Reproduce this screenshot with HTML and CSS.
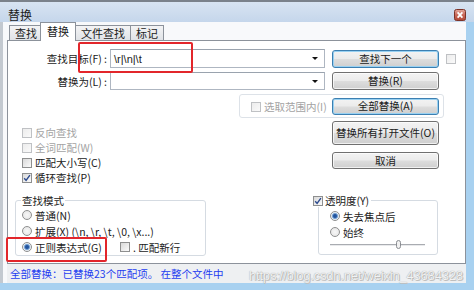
FILE: index.html
```html
<!doctype html>
<html lang="zh-CN">
  <head>
    <meta charset="UTF-8" />
    <title>替换</title>
    <link rel="stylesheet" href="styles.css">
  </head>
  <body>
    <div class="window">
      <div class="titlebar">
        <span class="title">替换</span>
        <span class="close">
          <svg width="12" height="12" viewBox="0 0 12 12">
            <defs>
              <linearGradient id="closeFill" x1="0" y1="0" x2="0" y2="1">
                <stop offset="0" stop-color="#e3a89c" />
                <stop offset="0.5" stop-color="#c9695a" />
                <stop offset="1" stop-color="#b04533" />
              </linearGradient>
            </defs>
            <rect x="0.5" y="0.5" width="11" height="11" rx="2" fill="url(#closeFill)" stroke="#7c3328" />
            <path d="M3.6 3.4 L8.4 8.6 M8.4 3.4 L3.6 8.6" stroke="#fff" stroke-width="1.7" />
          </svg>
        </span>
      </div>

      <div class="frame">
        <div class="client">
          <div class="tabs">
            <div class="tab">查找</div>
            <div class="tab active">替换</div>
            <div class="tab">文件查找</div>
            <div class="tab">标记</div>
          </div>

          <div class="page">
            <div class="form-grid">
              <label class="field-label">查找目标(F) :</label>
              <div class="combo"><span class="combo-text">\r|\n|\t</span><i class="arrow"></i></div>
              <button class="btn default">查找下一个</button>
              <span class="cb mini"></span>

              <label class="field-label">替换为(L) :</label>
              <div class="combo"><i class="arrow"></i></div>
              <button class="btn">替换(R)</button>

              <div class="sel-group">
                <label class="check disabled"><span class="cb"></span>选取范围内(I)</label>
              </div>
              <button class="btn default btn-all">全部替换(A)</button>
            </div>

            <div class="mid">
              <div class="options">
                <label class="check disabled"><span class="cb"></span>反向查找</label>
                <label class="check disabled"><span class="cb"></span>全词匹配(W)</label>
                <label class="check"><span class="cb"></span>匹配大小写(C)</label>
                <label class="check">
                  <span class="cb">
                    <svg width="8" height="8" viewBox="0 0 8 8"><path d="M1.2 4.2 L3.1 6.4 L6.9 1.2" fill="none" stroke="#2c4a8e" stroke-width="1.4" /></svg>
                  </span>循环查找(P)
                </label>
              </div>
              <div class="btn-stack">
                <button class="btn tall">替换所有打开文件(O)</button>
                <button class="btn short">取消</button>
              </div>
            </div>

            <div class="groups">
              <div class="group mode">
                <span class="legend">查找模式</span>
                <div class="opts">
                  <label class="radio"><span class="rd"></span>普通(N)</label>
                  <label class="radio"><span class="rd"></span>扩展(X) (\n, \r, \t, \0, \x...)</label>
                  <div class="opt-row">
                    <label class="radio regex"><span class="rd on"></span>正则表达式(G)</label>
                    <label class="check"><span class="cb"></span>. 匹配新行</label>
                  </div>
                </div>
              </div>

              <div class="group trans">
                <label class="legend check">
                  <span class="cb">
                    <svg width="8" height="8" viewBox="0 0 8 8"><path d="M1.2 4.2 L3.1 6.4 L6.9 1.2" fill="none" stroke="#2c4a8e" stroke-width="1.4" /></svg>
                  </span>透明度(Y)
                </label>
                <label class="radio first"><span class="rd on"></span>失去焦点后</label>
                <label class="radio"><span class="rd"></span>始终</label>
                <svg class="slider" width="96" height="12" viewBox="0 0 96 12">
                  <line x1="0" y1="5.5" x2="95" y2="5.5" stroke="#a9acb1" />
                  <line x1="0" y1="6.5" x2="95" y2="6.5" stroke="#e9eaec" />
                  <rect x="66.5" y="1.5" width="4" height="8" rx="2" fill="#f1f1f1" stroke="#8a8d92" />
                </svg>
              </div>
            </div>
          </div>

          <div class="status">全部替换：已替换23个匹配项。 在整个文件中</div>
        </div>
      </div>

      <div class="mark mark-find"></div>
      <div class="mark mark-regex"></div>
      <div class="watermark">https://blog.csdn.net/weixin_43684328</div>
    </div>
  </body>
</html>
```

FILE: styles.css
```css
body {
  margin: 0;
  font-family: "Noto Sans CJK SC", "Liberation Sans", sans-serif;
  font-size: 10.5px;
  color: #1b1b1b;
}
.window {
  position: relative;
  width: 474px;
  height: 290px;
  box-sizing: border-box;
  display: flex;
  flex-direction: column;
  background: #a8d1f0;
  border-top: 2px solid #7b828b;
  overflow: hidden;
}
.titlebar {
  flex: none;
  height: 20px;
  display: flex;
  align-items: flex-start;
  justify-content: space-between;
  padding: 0 8px;
  background: linear-gradient(#d8e4f2, #c5d6eb);
}
.title {
  font-size: 12px;
  line-height: 20px;
  padding-top: 3px;
}
.close {
  margin-top: 7px;
  line-height: 0;
}
.frame {
  flex: 1;
  display: flex;
  margin: 0 8px 7px 0;
}
.client {
  flex: 1;
  display: flex;
  flex-direction: column;
  border-left: 3px solid #c3c9d0;
  padding-left: 4px;
  background: #f8f9fb;
}

/* tabs */
.tabs {
  flex: none;
  height: 18px;
  display: flex;
  align-items: flex-end;
  padding-left: 2px;
}
.tab {
  height: 15px;
  line-height: 14px;
  padding: 0 5px;
  margin-right: -1px;
  box-sizing: border-box;
  border: 1px solid #8c929b;
  border-bottom: none;
  font-size: 11px;
  background: linear-gradient(#f4f4f5, #e0e3e7);
}
.tab.active {
  position: relative;
  z-index: 1;
  height: 19px;
  line-height: 17px;
  padding: 0 6px;
  margin: 0 -1px -1px -2px;
  background: #fff;
}

.page {
  flex: 1;
  background: #fff;
  border: 1px solid #8c929b;
}

/* find / replace fields */
.form-grid {
  display: grid;
  grid-template-columns: 102px 222px 114px 1fr;
  grid-template-rows: 19px 18px 24px;
  row-gap: 4px;
  align-items: center;
  padding-top: 8px;
}
.field-label {
  text-align: right;
  padding-right: 3px;
}
.combo {
  width: 215px;
  height: 100%;
  box-sizing: border-box;
  display: flex;
  align-items: center;
  padding-left: 3px;
  border: 1px solid #aeb6c1;
  border-top-color: #9aa3ae;
  background: #fff;
}
.combo-text {
  font-family: "Liberation Sans", sans-serif;
  font-size: 11px;
}
.arrow {
  margin-left: auto;
  margin-right: 6px;
  border-left: 3px solid transparent;
  border-right: 3px solid transparent;
  border-top: 3px solid #111;
}
.btn {
  width: 107px;
  height: 18px;
  padding: 0;
  box-sizing: border-box;
  font: inherit;
  color: inherit;
  line-height: 14px;
  border: 1px solid #707070;
  border-radius: 3px;
  background: linear-gradient(#f3f3f3 0%, #ebebeb 48%, #dddddd 52%, #cfcfcf 100%);
  box-shadow: inset 0 0 0 1px rgba(255, 255, 255, 0.7);
}
.btn.default {
  border-color: #3c7fb1;
  box-shadow: inset 0 0 0 1px #98d1f2;
}
.btn-all {
  grid-column: 3;
  grid-row: 3;
  height: 17px;
}
.sel-group {
  grid-column: 2 / 4;
  grid-row: 3;
  justify-self: end;
  width: 205px;
  height: 24px;
  margin-right: 2px;
  box-sizing: border-box;
  padding: 4px 0 0 11px;
  border: 1px solid #dde2e8;
  border-radius: 3px;
}
.mini {
  grid-column: 4;
  grid-row: 1;
}

/* checkboxes and radios */
.check,
.radio {
  display: flex;
  align-items: center;
  gap: 3px;
  height: 15px;
  white-space: nowrap;
}
.check.disabled {
  color: #a3a3a3;
}
.cb {
  flex: none;
  width: 10px;
  height: 10px;
  box-sizing: border-box;
  display: flex;
  align-items: center;
  justify-content: center;
  border: 1px solid #8e8f8f;
  background: linear-gradient(135deg, #d9d9d9, #fbfbfb);
}
.disabled .cb,
.cb.mini {
  border-color: #bfc1c4;
  background: linear-gradient(135deg, #ececec, #fafafa);
}
.rd {
  flex: none;
  width: 10px;
  height: 10px;
  box-sizing: border-box;
  border: 1px solid #8e8f8f;
  border-radius: 50%;
  background: radial-gradient(circle, #f7f7f7 0, #e2e2e2 100%);
}
.rd.on {
  background: radial-gradient(circle, #1d4c96 0, #2c5ea6 1.6px, #8db4de 2.8px, #eef2f6 3.6px, #f2f2f2 100%);
}

/* option checkboxes and remaining buttons */
.mid {
  display: flex;
  margin-top: 3px;
}
.options {
  margin-left: 14px;
  padding-top: 4px;
}
.btn-stack {
  margin-left: auto;
  margin-right: 26px;
  display: flex;
  flex-direction: column;
  gap: 7px;
}
.btn.tall {
  height: 24px;
}
.btn.short {
  height: 17px;
}

/* group boxes */
.groups {
  display: flex;
  margin-top: 15px;
}
.group {
  box-sizing: border-box;
  border: 1px solid #d5dbe2;
  border-radius: 3px;
}
.mode {
  width: 191px;
  height: 56px;
  margin-left: 7px;
}
.trans {
  width: 120px;
  height: 55px;
  margin-left: 112px;
}
.legend {
  display: flex;
  align-items: center;
  width: fit-content;
  height: 13px;
  margin-top: -7px;
  background: #fff;
}
.mode .legend {
  margin-left: 5px;
  padding: 0 1px;
}
.trans .legend {
  margin-left: -6px;
  padding-right: 2px;
  gap: 2px;
}
.opts {
  padding-left: 6px;
}
.opts .radio,
.opt-row {
  height: 16px;
}
.opt-row {
  display: flex;
  align-items: center;
}
.radio.regex {
  width: 98px;
}
.trans .radio {
  height: 16px;
  padding-left: 11px;
}
.trans .radio.first {
  margin-top: 1px;
}
.slider {
  display: block;
  margin: -1px 0 0 11px;
}

.status {
  flex: none;
  height: 19px;
  line-height: 19px;
  padding-left: 3px;
  color: #1f3ef0;
  background: #eef0f2;
}

/* red highlight marks drawn over the dialog */
.mark {
  position: absolute;
  box-sizing: border-box;
  border: 2px solid #e2262b;
  border-radius: 2px;
}
.mark-find {
  left: 78px;
  top: 40px;
  width: 115px;
  height: 31px;
}
.mark-regex {
  left: 6px;
  top: 235px;
  width: 101px;
  height: 25px;
}
.watermark {
  position: absolute;
  left: 249px;
  top: 266px;
  font-family: "Liberation Sans", sans-serif;
  font-size: 13px;
  letter-spacing: -0.2px;
  color: #f2f2f2;
  text-shadow: 0 0 1px #8f8f8f, 1px 1px 0 #c4c4c4;
}
```
